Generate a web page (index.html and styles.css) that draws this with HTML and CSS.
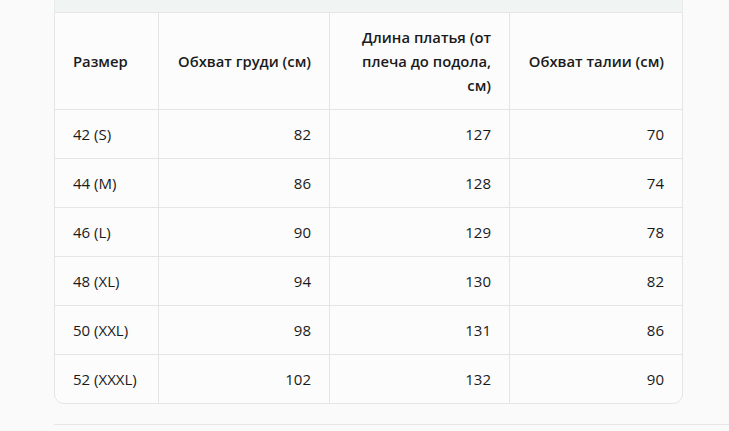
FILE: index.html
```html
<!DOCTYPE html>
<html lang="ru">
<head>
<meta charset="utf-8">
<link rel="stylesheet" href="styles.css">
</head>
<body>
<div class="page">
  <div class="wrap">
    <div class="band"></div>
    <table class="sizes">
      <thead>
        <tr>
          <th class="left c1">Размер</th>
          <th class="c2 one-line">Обхват груди (см)</th>
          <th class="c3">Длина платья (от плеча до подола, см)</th>
          <th class="c4 one-line">Обхват талии (см)</th>
        </tr>
      </thead>
      <tbody>
        <tr><td class="left">42 (S)</td><td>82</td><td>127</td><td>70</td></tr>
        <tr><td class="left">44 (M)</td><td>86</td><td>128</td><td>74</td></tr>
        <tr><td class="left">46 (L)</td><td>90</td><td>129</td><td>78</td></tr>
        <tr><td class="left">48 (XL)</td><td>94</td><td>130</td><td>82</td></tr>
        <tr><td class="left">50 (XXL)</td><td>98</td><td>131</td><td>86</td></tr>
        <tr><td class="left">52 (XXXL)</td><td>102</td><td>132</td><td>90</td></tr>
      </tbody>
    </table>
  </div>
  <div class="rule"></div>
</div>
</body>
</html>
```

FILE: styles.css
```css
html, body {
  margin: 0;
  padding: 0;
  background: #fafafa;
}
body {
  font-family: "Open Sans", "Noto Sans", "DejaVu Sans", sans-serif;
  color: #1a1a1a;
  width: 729px;
  height: 431px;
  overflow: hidden;
}
.page {
  padding-left: 54px;
}
.wrap {
  width: 629px;
}
.band {
  height: 12px;
  background: #f0f4f3;
  border-left: 1px solid #e6eaea;
  border-right: 1px solid #e6eaea;
  box-sizing: border-box;
}
.sizes {
  width: 629px;
  border-collapse: separate;
  border-spacing: 0;
  background: #fcfcfc;
  border: 1px solid #e5e5e5;
  border-radius: 0 0 10px 10px;
  table-layout: fixed;
  font-size: 15px;
  line-height: 24px;
}
.sizes th, .sizes td {
  padding: 12px 18px;
  text-align: right;
  border-right: 1px solid #e5e5e5;
  border-bottom: 1px solid #e5e5e5;
}
.sizes th:last-child, .sizes td:last-child {
  border-right: none;
}
.sizes tbody tr:last-child td {
  border-bottom: none;
}
.sizes th {
  font-weight: 600;
  font-size: 14.8px;
}
.sizes .left {
  text-align: left;
}
.sizes .one-line {
  white-space: nowrap;
}
.c1 { width: 67px; }
.c2 { width: 134px; }
.c3 { width: 143px; }
.c4 { width: 136px; }
.rule {
  margin-top: 20px;
  height: 1px;
  background: #e6e6e6;
}
```
